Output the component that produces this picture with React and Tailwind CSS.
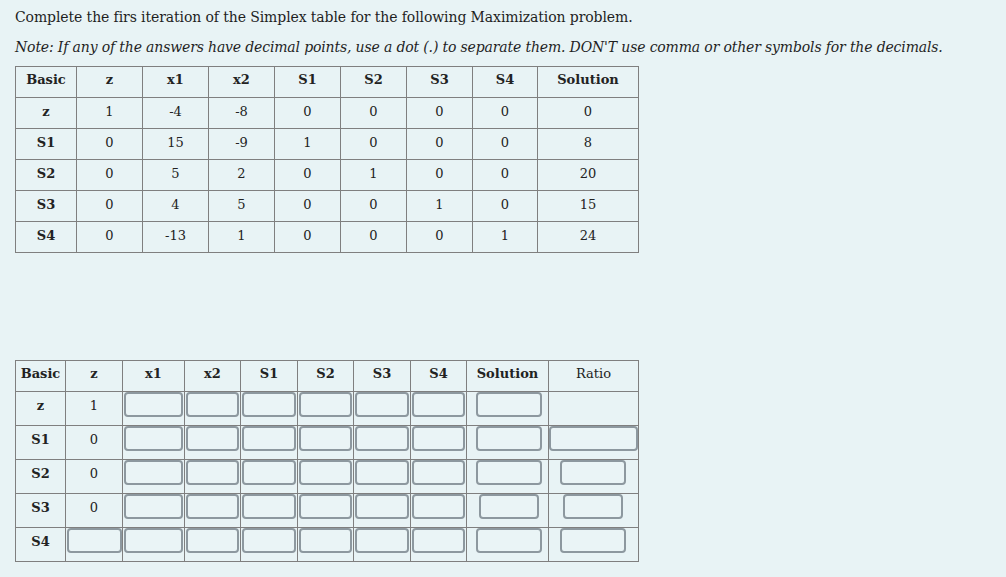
const cols1 = ['z', 'x1', 'x2', 'S1', 'S2', 'S3', 'S4', 'Solution'];
const w1 = [61, 66, 66, 66, 66, 66, 66, 65, 101];

const rows1 = [
  ['z', 1, -4, -8, 0, 0, 0, 0, 0],
  ['S1', 0, 15, -9, 1, 0, 0, 0, 8],
  ['S2', 0, 5, 2, 0, 1, 0, 0, 20],
  ['S3', 0, 4, 5, 0, 0, 1, 0, 15],
  ['S4', 0, -13, 1, 0, 0, 0, 1, 24],
];

const w2 = [50, 57, 62, 56, 57, 56, 57, 56, 82, 90];

function Box({ className = 'w-full' }) {
  return (
    <div className={`h-[25px] rounded-[4px] border-2 border-[#8d989f] bg-[#eaf4f6] ${className}`} />
  );
}

function FirstTable() {
  return (
    <table className="table-fixed border-collapse text-[13px] text-[#222]">
      <colgroup>
        {w1.map((w, i) => <col key={i} style={{ width: w }} />)}
      </colgroup>
      <thead>
        <tr className="h-[31px]">
          <th className="border border-[#7f7f7f] font-bold pb-[4px]">Basic</th>
          {cols1.map((c) => (
            <th key={c} className="border border-[#7f7f7f] font-bold pb-[4px]">{c}</th>
          ))}
        </tr>
      </thead>
      <tbody>
        {rows1.map((r) => (
          <tr key={r[0]} className="h-[31px]">
            <td className="border border-[#7f7f7f] text-center font-bold pb-[3px]">{r[0]}</td>
            {r.slice(1).map((v, i) => (
              <td key={i} className="border border-[#7f7f7f] text-center pb-[3px]">{v}</td>
            ))}
          </tr>
        ))}
      </tbody>
    </table>
  );
}

function SecondTable() {
  const basics = ['z', 'S1', 'S2', 'S3', 'S4'];
  const zvals = [1, 0, 0, 0, null];
  const solBox = ['w-[66px] ml-[9px]', 'w-[66px] ml-[9px]', 'w-[66px] ml-[9px]', 'w-[60px] ml-[12px]', 'w-[66px] ml-[9px]'];
  const ratioBox = [null, 'w-[89px] ml-0', 'w-[66px] ml-[11px]', 'w-[60px] ml-[14px]', 'w-[66px] ml-[11px]'];
  return (
    <table className="table-fixed border-collapse text-[13px] text-[#222]">
      <colgroup>
        {w2.map((w, i) => <col key={i} style={{ width: w }} />)}
      </colgroup>
      <thead>
        <tr className="h-[31px]">
          <th className="border border-[#7f7f7f] font-bold pb-[5px]">Basic</th>
          {['z', 'x1', 'x2', 'S1', 'S2', 'S3', 'S4', 'Solution'].map((c) => (
            <th key={c} className="border border-[#7f7f7f] font-bold pb-[5px]">{c}</th>
          ))}
          <th className="border border-[#7f7f7f] font-normal pb-[5px]">Ratio</th>
        </tr>
      </thead>
      <tbody>
        {basics.map((b, ri) => (
          <tr key={b} className="h-[34px]">
            <td className="border border-[#7f7f7f] text-center font-bold pb-[5px]">{b}</td>
            {zvals[ri] === null ? (
              <td className="border border-[#7f7f7f] p-0 pl-px pb-[7px] align-top">
                <Box />
              </td>
            ) : (
              <td className="border border-[#7f7f7f] text-center pb-[5px]">{zvals[ri]}</td>
            )}
            {[0, 1, 2, 3, 4, 5].map((i) => (
              <td key={i} className="border border-[#7f7f7f] p-0 px-px pb-[7px] align-top">
                <Box />
              </td>
            ))}
            <td className="border border-[#7f7f7f] p-0 pb-[7px] align-top">
              <Box className={solBox[ri]} />
            </td>
            <td className="border border-[#7f7f7f] p-0 pb-[7px] align-top">
              {ratioBox[ri] && <Box className={ratioBox[ri]} />}
            </td>
          </tr>
        ))}
      </tbody>
    </table>
  );
}

export default function App() {
  return (
    <div
      className="w-[1006px] h-[577px] bg-[#e8f3f5] text-[#1f1f1f] pl-[15px] pt-[8px] overflow-hidden"
      style={{ fontFamily: '"DejaVu Serif", serif' }}
    >
      <p className="text-[14px] leading-[18px] tracking-[-0.1px]">
        Complete the firs iteration of the Simplex table for the following Maximization problem.
      </p>
      <p className="mt-[12px] text-[14px] leading-[18px] italic tracking-[-0.15px] whitespace-nowrap">
        Note: If any of the answers have decimal points, use a dot (.) to separate them. DON'T use comma or other symbols for the decimals.
      </p>
      <div className="mt-[10px]">
        <FirstTable />
      </div>
      <div className="mt-[107px]">
        <SecondTable />
      </div>
    </div>
  );
}
